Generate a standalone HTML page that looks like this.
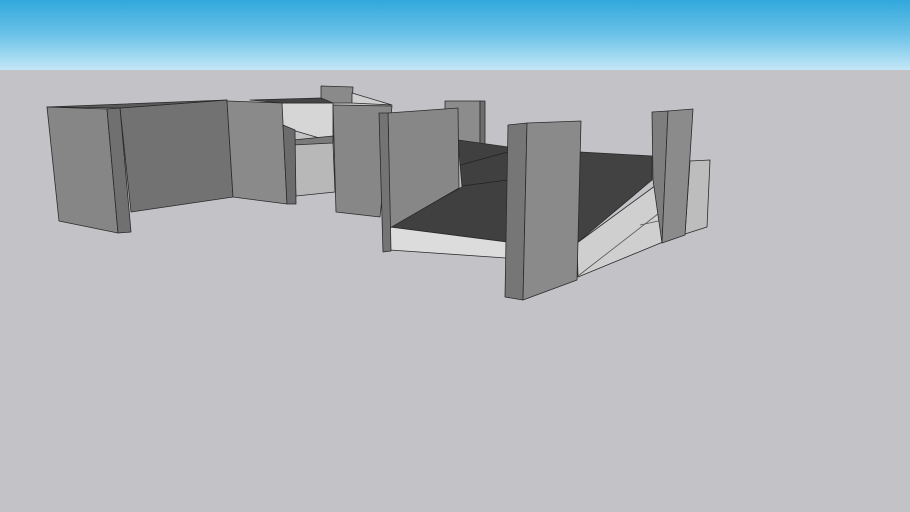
<!DOCTYPE html>
<html><head><style>
html,body{margin:0;padding:0;width:910px;height:512px;overflow:hidden;background:#c2c2c7}
</style></head><body>
<svg width="910" height="512" viewBox="0 0 910 512" xmlns="http://www.w3.org/2000/svg">
<defs><linearGradient id="sky" x1="0" y1="0" x2="0" y2="1">
<stop offset="0" stop-color="#31a8dc"/><stop offset="0.5" stop-color="#6cc2e8"/><stop offset="1" stop-color="#c4e7f6"/></linearGradient></defs>
<rect x="0" y="0" width="910" height="70" fill="url(#sky)"/>
<rect x="0" y="70" width="910" height="442" fill="#c2c2c7"/>
<g stroke="#2a2a2a" stroke-width="0.8" stroke-linejoin="round">
<!-- back pillar near center -->
<polygon points="321,86 353,87 352,103 321,103" fill="#8a8a8a"/>
<polygon points="352,93 392,105 352,103" fill="#d0d0d0"/>
<!-- back right pillar -->
<polygon points="445,101 480,101 480,146 445,146" fill="#8c8c8c"/>
<polygon points="480,101 485,101 485,146 480,146" fill="#6e6e6e"/>
<!-- left back wall -->
<polygon points="120,108 227,100 233,197 131,212" fill="#727272"/>
<polygon points="47,107 227,100 120,108" fill="#5a5a5a"/>
<!-- light slab + under -->
<polygon points="282,103 333,103 333,142 282,127" fill="#d6d6d6"/>
<polygon points="293,140 333,143 335,192 296,196" fill="#b8b8b8"/>
<polygon points="293,140 333,136 333,143 293,145" fill="#7a7a7a"/>
<polygon points="250,100 321,98 333,103 282,103" fill="#444"/>
<!-- middle wall face -->
<polygon points="227,101 282,103 287,204 233,197" fill="#8a8a8a"/>
<polygon points="283,125 295,130 296,204 287,204" fill="#6c6c6c"/>
<!-- left pillar -->
<polygon points="47,107 107,109 118,233 59,221" fill="#868686"/>
<polygon points="107,109 120,108 131,232 118,233" fill="#707070"/>
<!-- wall behind front wall -->
<polygon points="333,105 392,106 380,217 336,212" fill="#878787"/>
<!-- dark floor -->
<polygon points="458,140 508,147 508,242 390,227 462,187" fill="#404040"/>
<line x1="460" y1="165" x2="508" y2="152" stroke="#222"/>
<line x1="462" y1="186" x2="508" y2="180" stroke="#222"/>
<polygon points="580,152 652,156 652,180 577,243" fill="#424242"/>
<!-- light edge -->
<polygon points="390,227 507,242 506,258 390,250" fill="#dcdcdc"/>
<!-- front left wall -->
<polygon points="388,113 458,108 459,188 390,228" fill="#878787"/>
<polygon points="379,113 388,113 391,251 383,252" fill="#747474"/>
<!-- ramp -->
<polygon points="577,243 663,180 663,242 578,277" fill="#cfcfcf"/>
<line x1="578" y1="276" x2="663" y2="210" stroke="#555"/>
<line x1="640" y1="225" x2="663" y2="220" stroke="#555"/>
<!-- right block -->
<polygon points="690,161 710,160 707,227 685,234" fill="#bdbdbd"/>
<!-- right pillar -->
<polygon points="652,112 668,111 662,243 653,180" fill="#7e7e7e"/>
<polygon points="668,111 693,109 685,235 662,243" fill="#8b8b8b"/>
<!-- front pillar -->
<polygon points="508,125 527,123 523,300 505,297" fill="#767676"/>
<polygon points="527,123 581,121 577,280 523,300" fill="#8a8a8a"/>
</g>
</svg>
</body></html>
